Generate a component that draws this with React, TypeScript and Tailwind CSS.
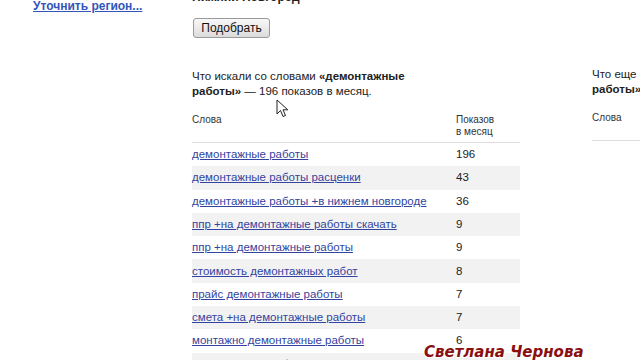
import React from 'react';

const rows: [string, number][] = [
  ['демонтажные работы', 196],
  ['демонтажные работы расценки', 43],
  ['демонтажные работы +в нижнем новгороде', 36],
  ['ппр +на демонтажные работы скачать', 9],
  ['ппр +на демонтажные работы', 9],
  ['стоимость демонтажных работ', 8],
  ['прайс демонтажные работы', 7],
  ['смета +на демонтажные работы', 7],
  ['монтажно демонтажные работы', 6],
  ['демонтажные работы цена', 5],
];

const Cursor: React.FC = () => (
  <svg width="13" height="19" viewBox="0 0 13 19" className="absolute left-[276px] top-[99px]">
    <path d="M1 1 L1 15 L4.5 11.5 L7 17.5 L9.5 16.5 L7 10.8 L11.8 10.8 Z" fill="#fff" stroke="#222" strokeWidth="1" strokeLinejoin="round" />
  </svg>
);

const App: React.FC = () => {
  return (
    <div className="relative w-[640px] h-[360px] overflow-hidden bg-white text-[#222]" style={{ fontFamily: 'Arial, "Liberation Sans", sans-serif' }}>
      <div className="flex">
        {/* Left column */}
        <div className="w-[192px] shrink-0 pl-[33px]">
          <a className="block -mt-[1px] text-[12px] font-bold text-[#3355bb] underline leading-[15px]">Уточнить регион...</a>
        </div>

        {/* Main column */}
        <div className="w-[328px] shrink-0">
          <div className="-mt-[10px] text-[12px] font-bold leading-[15px]">Нижний Новгород</div>
          <button className="mt-[13px] ml-[1px] h-[20px] w-[77px] rounded-[3px] border border-[#9a9a9a] bg-gradient-to-b from-[#f8f8f8] to-[#dcdcdc] text-[12px] text-[#111] leading-none">
            Подобрать
          </button>
          <p className="mt-[30px] w-[225px] text-[11.5px] leading-[15px]">
            Что искали со словами <b>«демонтажные работы»</b> — 196 показов в месяц.
          </p>
          <div className="mt-[15px] flex border-b border-[#dddddd] pb-[4px] text-[10px] text-[#333] leading-[12px]">
            <div className="flex-1">Слова</div>
            <div className="w-[64px]">
              Показов
              <br />в месяц
            </div>
          </div>
          <div>
            {rows.map(([word, count], i) => (
              <div key={i} className={`flex h-[23.3px] items-center text-[11.5px] ${i % 2 === 1 ? 'bg-[#f2f2f2]' : ''}`}>
                <a className="flex-1 text-[#3344a0] underline decoration-[#3344a0]">{word}</a>
                <span className="w-[64px] text-[#222]">{count}</span>
              </div>
            ))}
          </div>
        </div>

        {/* Right column */}
        <div className="ml-[72px] w-[200px] shrink-0">
          <p className="mt-[67px] whitespace-nowrap text-[11.5px] leading-[15px]">
            Что еще искали люди, искавшие «демонтажные
            <br />
            <b>работы»</b>
          </p>
          <div className="mt-[15px] border-b border-[#dddddd] pb-[16px] text-[10px] text-[#333] leading-[12px]">Слова</div>
        </div>
      </div>

      <Cursor />

      <div
        className="absolute left-[424px] top-[341px] text-[15px] font-bold italic text-[#8a1010]"
        style={{ fontFamily: '"DejaVu Sans", sans-serif', textShadow: '1px 1px 0 #fff, -1px -1px 0 #fff, 1px -1px 0 #fff, -1px 1px 0 #fff' }}
      >
        Светлана Чернова
      </div>
    </div>
  );
};

export default App;
